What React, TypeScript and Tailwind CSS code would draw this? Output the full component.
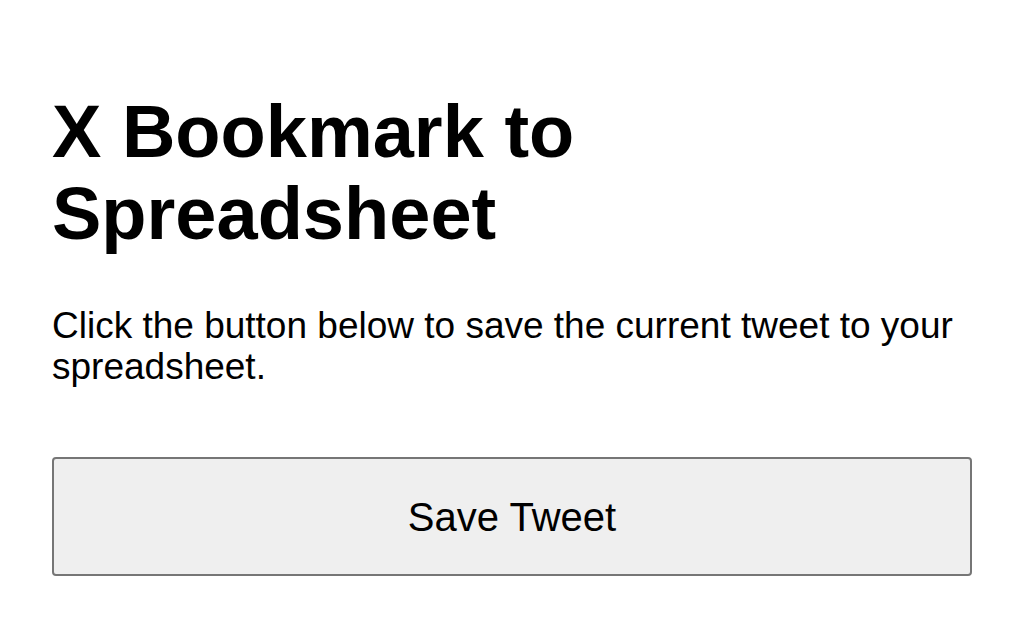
export default function App() {
  return (
    <div
      className="min-h-[638px] w-full bg-white px-[52px] pt-[91px] text-black"
      style={{ fontFamily: '"Liberation Sans", Arial, sans-serif' }}
    >
      <h1 className="text-[74px] font-bold leading-[82px]">
        X Bookmark to
        <br />
        Spreadsheet
      </h1>
      <p className="mt-[50px] w-[920px] text-[37px] leading-[41px]">
        Click the button below to save the current tweet to your spreadsheet.
      </p>
      <button
        type="button"
        className="mt-[70px] flex h-[119px] w-[920px] items-center justify-center rounded-[4px] border-2 border-[#767676] bg-[#efefef] text-[40px] leading-[46px] text-black"
      >
        Save Tweet
      </button>
    </div>
  );
}
